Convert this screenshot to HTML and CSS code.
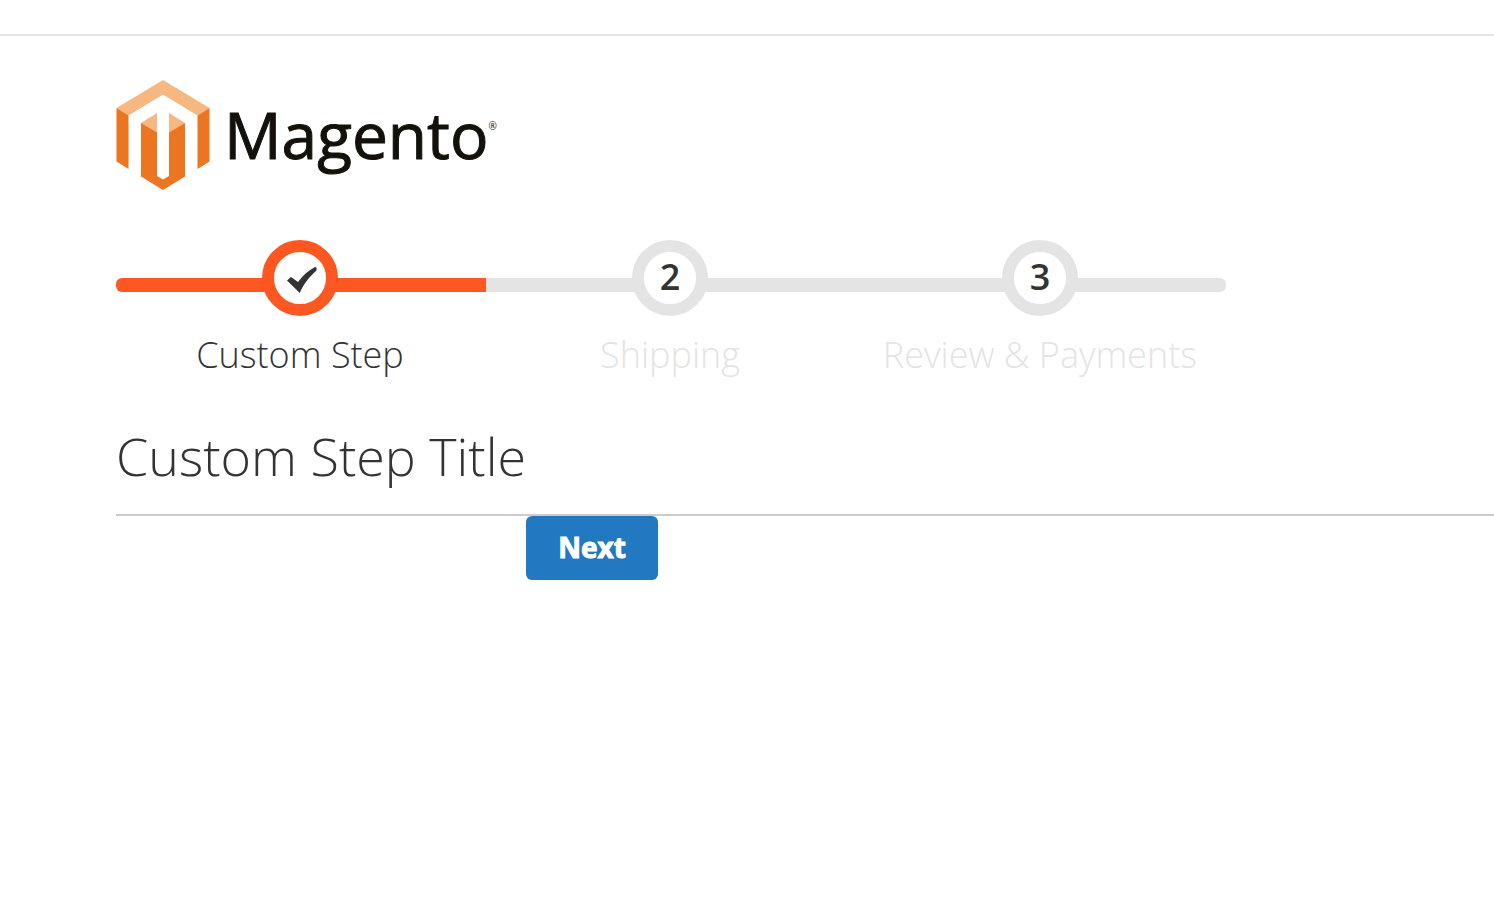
FILE: index.html
```html
<!DOCTYPE html>
<html lang="en">
<head>
<meta charset="utf-8">
<meta name="viewport" content="width=device-width, initial-scale=1">
<title>Checkout</title>
<link rel="stylesheet" href="styles.css">
</head>
<body>
<div class="topbar"></div>
<header class="header">
  <a class="logo" href="#" aria-label="Magento">
    <svg class="logo-mark" viewBox="0 0 94 110" aria-hidden="true">
      <path fill="#f6b781" d="M.5 28 47 0l46.500 28-12 7.500L47 14.500 12.500 35.500z"/>
      <path fill="#ec7521" d="M.5 28l12 7.500V89L.5 81.500zM93.500 28l-12 7.500V89L93.500 81.500z"/>
      <path fill="#f6b781" d="M41 33v20L25 43zM53 33v20l16-10z"/>
      <path fill="#ec7521" d="M25 43l16 9.500V96l6 3.500 6-3.500V52.500L69 43v53.500L47 110 25 96.500z"/>
    </svg>
    <span class="logo-name">Magento</span>
    <span class="logo-reg">®</span>
  </a>
</header>
<main class="checkout">
  <ol class="steps">
    <li class="step step-active">
      <span class="step-badge">
        <svg class="step-check" viewBox="0 0 30 26" aria-hidden="true"><path fill="#333" d="M0 13.500 4 10l7 5C16 8 22 3 28 0l1.500.5V3.500C22 10 16 18 12.800 26z"/></svg>
      </span>
      <span class="step-label">Custom Step</span>
    </li>
    <li class="step">
      <span class="step-badge">2</span>
      <span class="step-label">Shipping</span>
    </li>
    <li class="step">
      <span class="step-badge">3</span>
      <span class="step-label">Review &amp; Payments</span>
    </li>
  </ol>
  <h1 class="title">Custom Step Title</h1>
  <form class="actions">
    <button class="next" type="button">Next</button>
  </form>
</main>
</body>
</html>
```
FILE: styles.css
```css
* {
  box-sizing: border-box;
}

body {
  margin: 0;
  background: #fff;
  color: #333;
  font-family: "Open Sans", "Noto Sans", sans-serif;
}

.topbar {
  height: 36px;
  border-bottom: 2px solid #e5e5e5;
}

.header {
  padding: 44px 0 0 116px;
}

.logo {
  display: inline-flex;
  align-items: center;
  color: #14110a;
  text-decoration: none;
  vertical-align: top;
}

.logo-mark {
  width: 94px;
  height: 110px;
  margin-right: 14px;
}

.logo-name {
  font-size: 64px;
  line-height: 110px;
  -webkit-text-stroke: 1px #14110a;
}

.logo-reg {
  align-self: flex-start;
  padding-top: 38px;
  font-size: 10px;
  line-height: 16px;
}

.checkout {
  padding: 50px 0 0 116px;
}

.steps {
  display: flex;
  max-width: 1110px;
  margin: 0;
  padding: 0;
  list-style: none;
}

.step {
  position: relative;
  flex: 1;
  display: flex;
  flex-direction: column;
  align-items: center;
  padding-right: 2px;
  color: #e4e4e4;
}

.step::before {
  content: "";
  position: absolute;
  top: 38px;
  left: 0;
  right: 0;
  height: 14px;
  background: #e4e4e4;
}

.step:first-child::before {
  border-radius: 6px 0 0 6px;
}

.step:last-child::before {
  border-radius: 0 6px 6px 0;
}

.step-badge {
  position: relative;
  display: flex;
  align-items: center;
  justify-content: center;
  width: 76px;
  height: 76px;
  padding-bottom: 2px;
  border: 12px solid #e4e4e4;
  border-radius: 50%;
  background: #fff;
  color: #333;
  font-size: 36px;
  font-weight: 600;
  line-height: 50px;
}

.step-check {
  width: 30px;
  height: 26px;
  margin: 6px 0 0 3px;
}

.step-label {
  margin-top: 14px;
  font-size: 36px;
  font-weight: 300;
  line-height: 50px;
}

.step-active {
  color: #333;
}

.step-active::before {
  background: #ff5722;
}

.step-active .step-badge {
  border-color: #ff5722;
}

.title {
  margin: 41px 0 0;
  padding-bottom: 23px;
  border-bottom: 2px solid #ccc;
  font-size: 52px;
  font-weight: 300;
  line-height: 70px;
}

.actions {
  padding-left: 410px;
}

.next {
  display: block;
  min-width: 132px;
  padding: 13px 32px 15px;
  border: 0;
  border-radius: 6px;
  background: #2279c1;
  color: #fff;
  font-family: inherit;
  font-size: 28px;
  font-weight: 700;
  line-height: 36px;
  -webkit-text-stroke: 1px #fff;
}
```
